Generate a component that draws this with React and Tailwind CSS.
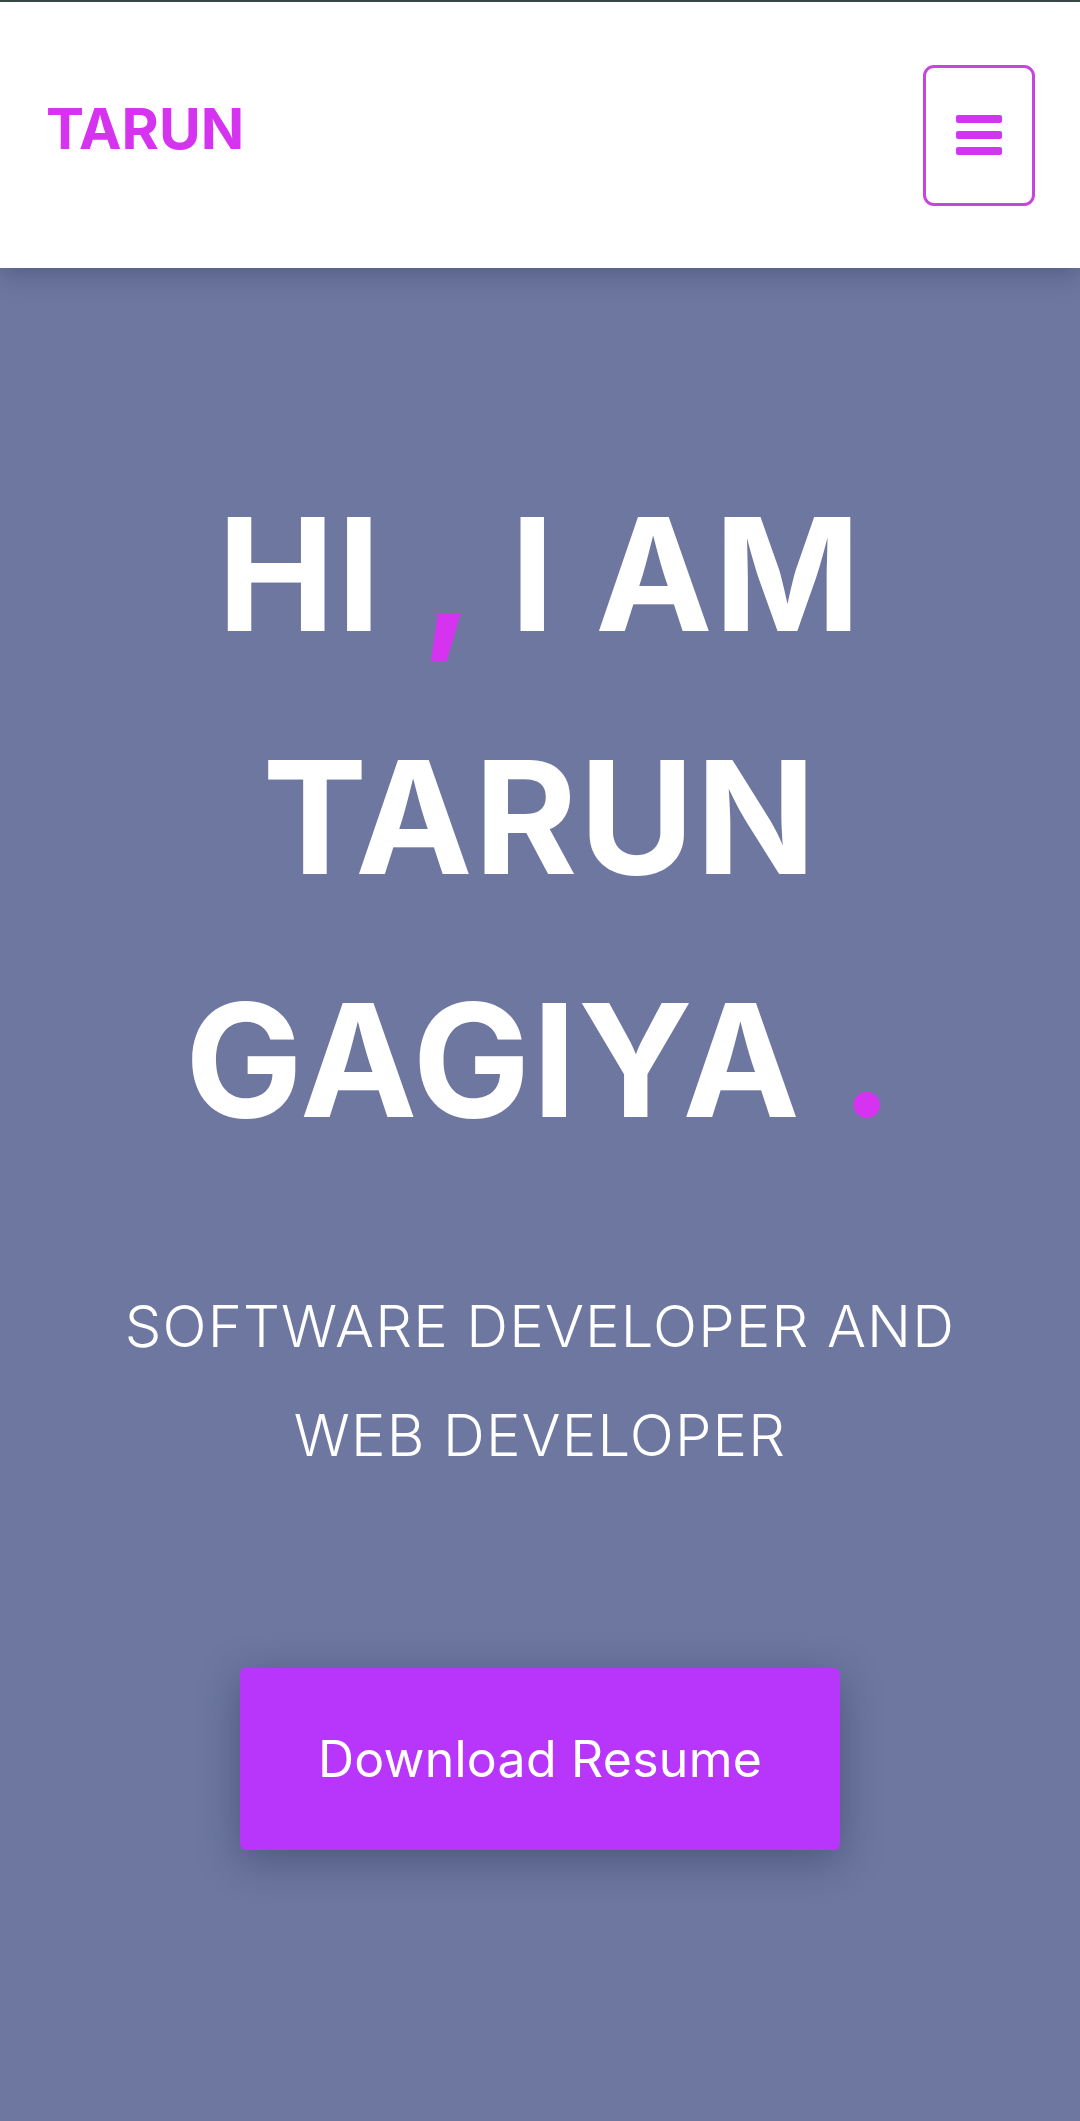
import { useState } from "react";

function MenuButton({ onClick }) {
  return (
    <button
      onClick={onClick}
      className="flex items-center justify-center w-[112px] h-[141px] border-[3px] border-[#c545dd] rounded-[11px] bg-white"
      aria-label="Open menu"
    >
      <span className="flex flex-col gap-[8px] w-[46px]">
        <span className="block h-[8px] rounded-[2px] bg-[#d433f2]" />
        <span className="block h-[8px] rounded-[2px] bg-[#d433f2]" />
        <span className="block h-[8px] rounded-[2px] bg-[#d433f2]" />
      </span>
    </button>
  );
}

export default function App() {
  const [open, setOpen] = useState(false);

  return (
    <div className="min-h-[2121px] flex flex-col bg-[#6d77a0] font-['Inter','Noto_Sans',sans-serif]">
      <div className="h-[2px] bg-[#3b4a45]" />

      {/* Header */}
      <header className="relative z-10 h-[266px] bg-white flex items-center justify-between pl-[46px] pr-[45px] shadow-[0_6px_24px_rgba(40,45,80,0.35)]">
        <a href="#" className="mb-[14px] text-[57px] font-bold text-[#d633f0] leading-none">
          TARUN
        </a>
        <MenuButton onClick={() => setOpen(!open)} />
      </header>

      {/* Hero */}
      <section className="flex flex-col items-center pt-[185px] text-white text-center">
        <h1 className="text-[157px] leading-[243px] font-bold tracking-[0.012em]">
          <span className="block">
            HI <span className="text-[#d633f0]">,</span> I AM
          </span>
          <span className="block">TARUN</span>
          <span className="block">
            GAGIYA <span className="text-[#d633f0]">.</span>
          </span>
        </h1>

        <p className="mt-[90px] text-[58px] leading-[109px] font-light tracking-[0.02em]">
          SOFTWARE DEVELOPER AND
          <br />
          WEB DEVELOPER
        </p>

        <button className="mt-[178px] w-[600px] h-[182px] rounded-[6px] bg-[#b836fb] text-[50px] font-normal tracking-[0.005em] text-white shadow-[0_10px_40px_rgba(40,45,80,0.45)]">
          Download Resume
        </button>
      </section>
    </div>
  );
}
